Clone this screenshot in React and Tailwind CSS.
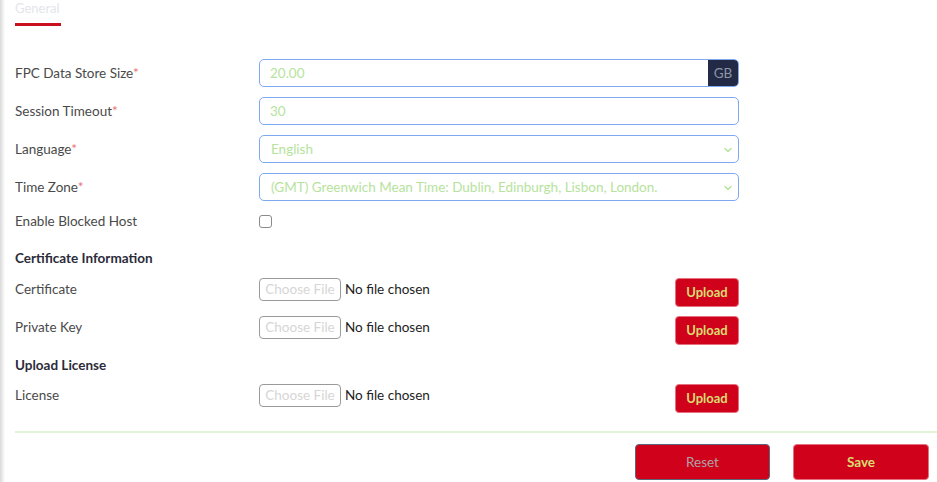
import React from "react";

const font = { fontFamily: "Lato, 'Open Sans', sans-serif" };

function Label({ text, required }) {
    return (
        <div className="w-[244px] shrink-0 text-[13.5px] text-[#4a4a4a]">
            {text}
            {required && <span className="text-[#e57373]">*</span>}
        </div>
    );
}

function Chevron() {
    return (
        <svg width="10" height="10" viewBox="0 0 10 10" className="absolute right-[6px] top-[10px] pointer-events-none">
            <path d="M2 3.5l3 3 3-3" fill="none" stroke="#b6e39c" strokeWidth="1.5" strokeLinecap="round" />
        </svg>
    );
}

function FileRow({ label }) {
    return (
        <div className="flex items-start">
            <div className="w-[244px] shrink-0 text-[13.5px] leading-[23px] text-[#4a4a4a]">{label}</div>
            <div className="w-[480px] flex justify-between items-start">
                <div className="flex items-center">
                    <button className="w-[82px] h-[23px] border border-[#9a9a9a] rounded-[4px] text-[13.5px] text-[#d6d6d6] bg-white leading-none">
                        Choose File
                    </button>
                    <span className="ml-[4px] text-[13.5px] text-[#222]">No file chosen</span>
                </div>
                <button className="w-[64px] h-[29px] rounded-[4px] bg-[#d0021b] border border-[#e5707e] text-[13px] font-bold text-[#d9dd72]">
                    Upload
                </button>
            </div>
        </div>
    );
}

export default function App() {
    return (
        <div className="flex w-[937px] h-[482px] bg-white overflow-hidden" style={font}>
            <div className="w-[5px] shrink-0 bg-gradient-to-r from-[#d9d9d9] to-white" />
            <div className="flex-1 pl-[10px] flex flex-col">
                {/* tab */}
                <div className="mt-[-2px] w-[46px] pb-[5px] border-b-[3px] border-[#c8101e]">
                    <div className="text-[13px] leading-[20px] text-[#e3e5ea]">General</div>
                </div>

                <div className="mt-[33px] flex flex-col gap-[10px]">
                    <div className="flex items-center">
                        <Label text="FPC Data Store Size" required />
                        <div className="w-[480px] h-[28px] flex border border-[#7ea9f0] rounded-[5px] overflow-hidden">
                            <input
                                className="flex-1 min-w-0 pl-[10px] text-[13.5px] text-[#b6e39c] outline-none"
                                defaultValue="20.00"
                            />
                            <div className="w-[30px] bg-[#222a45] text-[#8e95a6] text-[13.5px] flex items-center justify-center">GB</div>
                        </div>
                    </div>
                    <div className="flex items-center">
                        <Label text="Session Timeout" required />
                        <input
                            className="w-[480px] h-[28px] border border-[#7ea9f0] rounded-[5px] pl-[10px] text-[13.5px] text-[#b6e39c] outline-none"
                            defaultValue="30"
                        />
                    </div>
                    <div className="flex items-center">
                        <Label text="Language" required />
                        <div className="relative w-[480px]">
                            <select className="appearance-none w-full h-[28px] border border-[#7ea9f0] rounded-[5px] pl-[11px] text-[13.5px] text-[#b6e39c] bg-white outline-none">
                                <option>English</option>
                            </select>
                            <Chevron />
                        </div>
                    </div>
                    <div className="flex items-center">
                        <Label text="Time Zone" required />
                        <div className="relative w-[480px]">
                            <select className="appearance-none w-full h-[28px] border border-[#7ea9f0] rounded-[5px] pl-[11px] text-[13.5px] text-[#b6e39c] bg-white outline-none">
                                <option>(GMT) Greenwich Mean Time: Dublin, Edinburgh, Lisbon, London.</option>
                            </select>
                            <Chevron />
                        </div>
                    </div>
                </div>

                <div className="mt-[13px] flex items-center h-[15px]">
                    <Label text="Enable Blocked Host" />
                    <div className="w-[13px] h-[13px] border border-[#8a8a8a] rounded-[3px] bg-white" />
                </div>

                <div className="mt-[19px] text-[13.5px] leading-[20px] font-bold text-[#2b2b3a]">Certificate Information</div>
                <div className="mt-[10px] flex flex-col gap-[9px]">
                    <FileRow label="Certificate" />
                    <FileRow label="Private Key" />
                </div>

                <div className="mt-[10px] text-[13.5px] leading-[20px] font-bold text-[#2b2b3a]">Upload License</div>
                <div className="mt-[9px]">
                    <FileRow label="License" />
                </div>

                <div className="mt-[18px] h-[2px] bg-[#e2f3d6]" />

                <div className="mt-[11px] flex justify-end gap-[23px] pr-[8px]">
                    <button className="w-[135px] h-[36px] rounded-[4px] bg-[#d0021b] border border-[#5f6478] text-[13.5px] text-[#a9a3a8]">
                        Reset
                    </button>
                    <button className="w-[136px] h-[36px] rounded-[4px] bg-[#d0021b] border border-[#e5707e] text-[13.5px] font-bold text-[#d9dd72]">
                        Save
                    </button>
                </div>
            </div>
        </div>
    );
}
